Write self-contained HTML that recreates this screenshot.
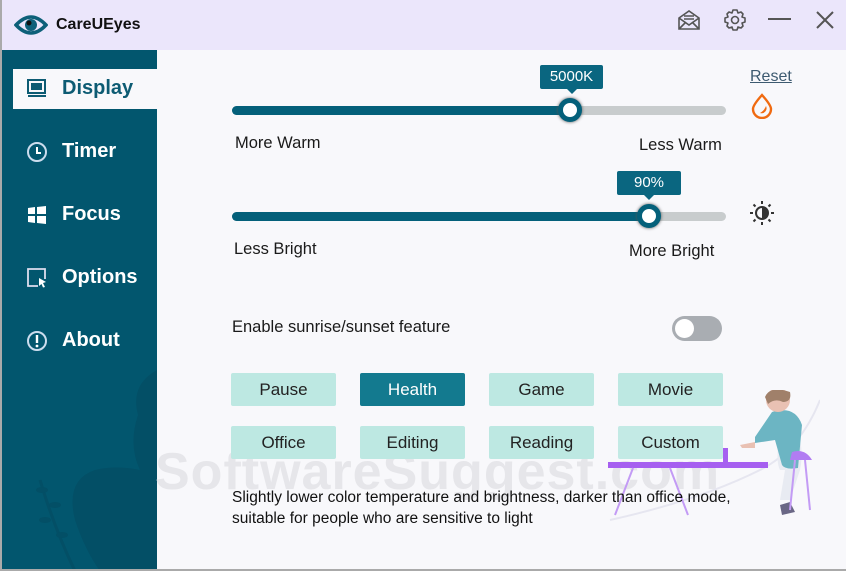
<!DOCTYPE html>
<html><head><style>
*{margin:0;padding:0;box-sizing:border-box}
body{width:846px;height:571px;position:relative;overflow:hidden;background:#f8f8fb;font-family:"Liberation Sans",sans-serif;color:#1a1a1a}
.a{position:absolute}
.hdr{left:0;top:0;width:846px;height:50px;background:#ebe6fb;border-left:2px solid #aaa}
.side{left:0;top:50px;width:157px;height:521px;background:#02566e;border-left:2px solid #aaa}
.nav{left:62px;font-size:20px;font-weight:bold;color:#fff}
.btn{width:105px;height:33px;background:#bde8e2;border-radius:2px;font-size:17px;text-align:center;line-height:33px;color:#222}
.lbl{font-size:16.5px;color:#1a1a1a}
.track{height:9px;border-radius:5px;background:#c8cccd}
.fill{height:9px;border-radius:5px;background:#04607a}
.thumb{width:24px;height:24px;border-radius:50%;background:#fff;border:5px solid #04607a;box-shadow:0 0 3px #555}
.tip{background:#0a6680;color:#fff;font-size:15px;text-align:center;line-height:24px;height:24px;border-radius:2px}
.tip:after{content:"";position:absolute;left:50%;bottom:-5px;margin-left:-5px;border:5px solid transparent;border-bottom:0;border-top-color:#0a6680}
</style></head><body>
<div class="a hdr"></div>
<svg class="a" style="left:14px;top:13px" width="34" height="24" viewBox="0 0 34 24"><path d="M2 12Q17 -4 32 12Q17 28 2 12Z" fill="none" stroke="#0d6079" stroke-width="3.5"/><circle cx="17" cy="12" r="6" fill="#0d6079"/><circle cx="15" cy="10" r="2.5" fill="#111"/></svg>
<div class="a" style="left:56px;top:16px;font-size:16px;font-weight:bold;color:#111">CareUEyes</div>
<svg class="a" style="left:677px;top:9px" width="24" height="22" viewBox="0 0 24 22"><path d="M2 9L12 2L22 9V20H2Z M2 9L12 16L22 9 M2 20L9 13 M22 20L15 13 M7 7H17 M7 10H17" fill="none" stroke="#555" stroke-width="1.6"/></svg>
<svg class="a" style="left:723px;top:8px" width="24" height="24" viewBox="0 0 24 24"><path d="M10 2H14L15 5L18 4L20 6L19 9L22 10V14L19 15L20 18L18 20L15 19L14 22H10L9 19L6 20L4 18L5 15L2 14V10L5 9L4 6L6 4L9 5Z" fill="none" stroke="#555" stroke-width="1.6" stroke-linejoin="round"/><circle cx="12" cy="12" r="3.5" fill="none" stroke="#555" stroke-width="1.6"/></svg>
<div class="a" style="left:768px;top:18px;width:23px;height:2px;background:#555"></div>
<svg class="a" style="left:815px;top:10px" width="20" height="20" viewBox="0 0 20 20"><path d="M2 2L18 18M18 2L2 18" stroke="#555" stroke-width="2"/></svg>
<div class="a side"></div>
<svg class="a" style="left:0;top:370px" width="157" height="201" viewBox="0 0 157 201"><path d="M157 0Q130 15 138 45Q128 75 140 100Q115 95 95 100Q65 110 75 150Q85 180 100 201H157Z" fill="#034f66"/><path d="M40 110Q55 160 75 201" stroke="#034f66" stroke-width="3" fill="none"/><g fill="#034f66"><ellipse cx="42" cy="120" rx="6" ry="3"/><ellipse cx="55" cy="135" rx="6" ry="3"/><ellipse cx="45" cy="150" rx="6" ry="3"/><ellipse cx="62" cy="165" rx="6" ry="3"/></g></svg>
<div class="a" style="left:13px;top:69px;width:144px;height:40px;background:#f8f8fb"></div>
<svg class="a" style="left:26px;top:78px" width="22" height="22" viewBox="0 0 22 22"><rect x="2" y="2" width="17" height="13" fill="none" stroke="#0d5b73" stroke-width="2"/><rect x="5" y="5" width="11" height="7" fill="#0d5b73"/><path d="M2 18H20" stroke="#0d5b73" stroke-width="2"/></svg>
<div class="a nav" style="top:77px;color:#0d5b73">Display</div>
<svg class="a" style="left:26px;top:141px" width="22" height="22" viewBox="0 0 22 22"><circle cx="11" cy="11" r="9" fill="none" stroke="#cde" stroke-width="2"/><path d="M11 6V12H15" stroke="#fff" stroke-width="2" fill="none"/></svg>
<div class="a nav" style="top:140px">Timer</div>
<svg class="a" style="left:27px;top:205px" width="20" height="20" viewBox="0 0 20 20"><path d="M1 3L8 2V9H1ZM10 2L19 1V9H10ZM1 11H8V18L1 17ZM10 11H19V19L10 18Z" fill="#fff"/></svg>
<div class="a nav" style="top:203px">Focus</div>
<svg class="a" style="left:26px;top:267px" width="22" height="22" viewBox="0 0 22 22"><path d="M12 19H2V2H19V12" fill="none" stroke="#dde" stroke-width="1.8"/><path d="M13 11L20 15L17 16L19 20L17 20.5L15.5 17L13 19Z" fill="#fff"/></svg>
<div class="a nav" style="top:266px">Options</div>
<svg class="a" style="left:26px;top:330px" width="22" height="22" viewBox="0 0 22 22"><circle cx="11" cy="11" r="9" fill="none" stroke="#cde" stroke-width="2"/><path d="M11 5V13" stroke="#fff" stroke-width="2.4"/><circle cx="11" cy="16" r="1.4" fill="#fff"/></svg>
<div class="a nav" style="top:329px">About</div>

<div class="a" style="left:750px;top:68px;font-size:16px;color:#3d5a70;text-decoration:underline">Reset</div>
<svg class="a" style="left:750px;top:93px" width="24" height="26" viewBox="0 0 24 26"><path d="M12 2Q3 12 3 16A9 9 0 0 0 21 16Q21 12 12 2Z" fill="none" stroke="#f06a10" stroke-width="2.4"/><path d="M16 13A5 5 0 0 1 10 20Q14 18 16 13Z" fill="#f06a10"/></svg>
<svg class="a" style="left:749px;top:200px" width="26" height="26" viewBox="0 0 26 26"><circle cx="13" cy="13" r="6" fill="none" stroke="#333" stroke-width="2"/><path d="M13 7A6 6 0 0 1 13 19Z" fill="#333"/><g stroke="#333" stroke-width="2"><path d="M13 1V4M13 22V25M1 13H4M22 13H25M4.5 4.5L6.5 6.5M19.5 19.5L21.5 21.5M4.5 21.5L6.5 19.5M19.5 6.5L21.5 4.5"/></g></svg>

<div class="a track" style="left:232px;top:106px;width:494px"></div>
<div class="a fill" style="left:232px;top:106px;width:340px"></div>
<div class="a thumb" style="left:558px;top:98px"></div>
<div class="a tip" style="left:540px;top:65px;width:63px">5000K</div>
<div class="a lbl" style="left:235px;top:134px">More Warm</div>
<div class="a lbl" style="left:639px;top:136px">Less Warm</div>

<div class="a track" style="left:232px;top:212px;width:494px"></div>
<div class="a fill" style="left:232px;top:212px;width:418px"></div>
<div class="a thumb" style="left:637px;top:204px"></div>
<div class="a tip" style="left:617px;top:171px;width:64px">90%</div>
<div class="a lbl" style="left:234px;top:240px">Less Bright</div>
<div class="a lbl" style="left:629px;top:242px">More Bright</div>

<div class="a lbl" style="left:232px;top:318px">Enable sunrise/sunset feature</div>
<div class="a" style="left:672px;top:316px;width:50px;height:25px;border-radius:13px;background:#a9adb2"></div>
<div class="a" style="left:675px;top:319px;width:19px;height:19px;border-radius:50%;background:#fff"></div>

<div class="a" style="left:155px;top:442px;font-size:52px;font-weight:bold;color:#e6e6ea;letter-spacing:1px">SoftwareSuggest.com</div>

<svg class="a" style="left:600px;top:390px" width="220" height="160" viewBox="0 0 220 160"><path d="M10 130Q100 110 160 80Q200 60 220 10" fill="none" stroke="#e6e6f0" stroke-width="2"/><path d="M8 72H168V78H8Z" fill="#a65ff0"/><path d="M123 58H128V72H123Z" fill="#a65ff0"/><path d="M33 78L15 125M70 78L88 125" stroke="#c39bf5" stroke-width="2"/><path d="M180 45Q175 70 180 80L200 80Q205 55 195 40Z" fill="#e8ebf2"/><path d="M200 80L190 110H180L185 80Z" fill="#e8ebf2"/><path d="M180 115L190 112L195 122L182 125Z" fill="#6a6785"/><path d="M172 22Q195 15 202 35L198 78Q185 80 182 75L175 50L155 53V47Z" fill="#6cb5c3"/><circle cx="178" cy="10" r="12" fill="#e9c1b3"/><path d="M165 7Q170 -5 190 2Q192 12 183 12Q175 8 168 14Z" fill="#a0806a"/><path d="M192 62Q205 58 212 70H190Z" fill="#b27df2"/><path d="M195 70L190 120M205 70L210 120" stroke="#c39bf5" stroke-width="2"/><path d="M140 55L155 52V58L142 58Z" fill="#e9c1b3"/></svg>

<div class="a btn" style="left:231px;top:373px">Pause</div>
<div class="a btn" style="left:360px;top:373px;background:#137a8f;color:#fff">Health</div>
<div class="a btn" style="left:489px;top:373px">Game</div>
<div class="a btn" style="left:618px;top:373px">Movie</div>
<div class="a btn" style="left:231px;top:426px">Office</div>
<div class="a btn" style="left:360px;top:426px">Editing</div>
<div class="a btn" style="left:489px;top:426px">Reading</div>
<div class="a btn" style="left:618px;top:426px;background:rgba(189,232,226,.9)">Custom</div>

<div class="a" style="left:232px;top:487px;font-size:15.5px;line-height:21px;color:#111;width:600px">Slightly lower color temperature and brightness, darker than office mode,<br>suitable for people who are sensitive to light</div>
<div class="a" style="left:0;top:569px;width:846px;height:2px;background:#aaa"></div>
</body></html>
